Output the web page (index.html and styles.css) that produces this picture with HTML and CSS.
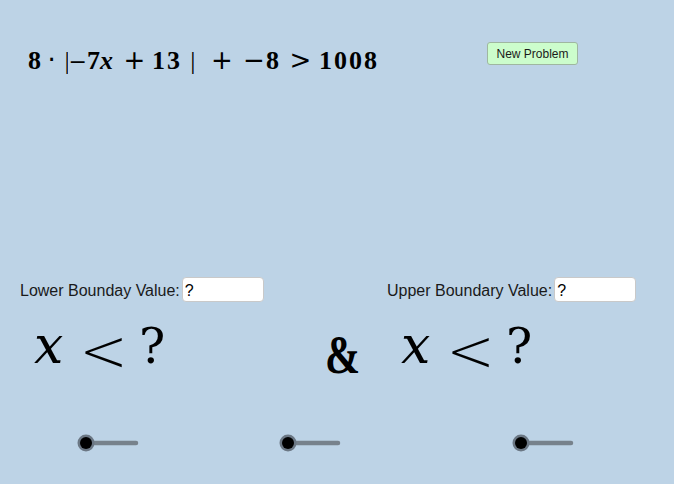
FILE: index.html
```html
<!DOCTYPE html>
<html>
<head>
<meta charset="utf-8">
<link rel="stylesheet" href="styles.css">
</head>
<body>
<div class="app">
  <div class="top">
    <div class="eq">
      <span class="tk d t1">8</span><span class="tk op t2">·</span><span class="tk bar t3">|</span><span class="tk op sm t4">−</span><span class="tk t5">7</span><span class="tk v t6">x</span><span class="tk op t7">+</span><span class="tk d t8">13</span><span class="tk bar t9">|</span><span class="tk op t10">+</span><span class="tk op t11">−</span><span class="tk d t12">8</span><span class="tk op t13">&gt;</span><span class="tk d t14">1008</span>
    </div>
    <button class="btn">New Problem</button>
  </div>

  <div class="inputs">
    <div class="field lower">
      <label class="lbl">Lower Bounday Value:</label><input class="box" type="text" value="?">
    </div>
    <div class="field">
      <label class="lbl">Upper Boundary Value:</label><input class="box" type="text" value="?">
    </div>
  </div>

  <div class="ineqs">
    <div class="ineq first"><span class="bx">x</span><span class="blt">&lt;</span><span class="bq">?</span></div><div class="amp"><span class="ampg">&amp;</span></div><div class="ineq"><span class="bx">x</span><span class="blt">&lt;</span><span class="bq">?</span></div>
  </div>

  <div class="sliders">
    <svg class="slider s1" width="70" height="20" viewBox="0 0 70 20"><line x1="10" y1="10" x2="60" y2="10" stroke="#77828c" stroke-width="4.5" stroke-linecap="round"/><circle cx="10" cy="10" r="8.5" fill="#6b7784"/><circle cx="10" cy="10" r="6" fill="#000"/></svg>
    <svg class="slider s2" width="70" height="20" viewBox="0 0 70 20"><line x1="10" y1="10" x2="60" y2="10" stroke="#77828c" stroke-width="4.5" stroke-linecap="round"/><circle cx="10" cy="10" r="8.5" fill="#6b7784"/><circle cx="10" cy="10" r="6" fill="#000"/></svg>
    <svg class="slider s3" width="70" height="20" viewBox="0 0 70 20"><line x1="10" y1="10" x2="60" y2="10" stroke="#77828c" stroke-width="4.5" stroke-linecap="round"/><circle cx="10" cy="10" r="8.5" fill="#6b7784"/><circle cx="10" cy="10" r="6" fill="#000"/></svg>
  </div>
</div>
</body>
</html>
```

FILE: styles.css
```css
html, body {
  margin: 0;
  padding: 0;
  background: #bdd3e6;
}
.app {
  width: 674px;
  height: 484px;
  background: #bdd3e6;
  display: flex;
  flex-direction: column;
  overflow: hidden;
}
.top {
  display: flex;
  align-items: flex-start;
  padding: 42px 0 0 28px;
  height: 23px;
}
.eq {
  width: 459px;
  flex-shrink: 0;
  font-family: "Liberation Serif", serif;
  font-weight: bold;
  font-size: 26px;
  line-height: 30px;
  margin-top: 3px;
  color: #000;
  white-space: nowrap;
  display: flex;
  align-items: baseline;
}
.tk { display: inline-block; flex-shrink: 0; }
.d { letter-spacing: 2px; }
.v { font-style: italic; }
.op {
  font-family: "DejaVu Sans", sans-serif;
  font-weight: normal;
  font-size: 26px;
}
.op.sm { font-size: 22px; }
.bar { font-weight: normal; overflow: hidden; color: #000; }
.t1 { width: 19.4px; }
.t2 { width: 17px; }
.t3 { width: 4px; }
.t4 { width: 18.5px; }
.t5 { width: 13.1px; }
.t6 { width: 23.6px; }
.t7 { width: 28.4px; }
.t8 { width: 38.4px; }
.t9 { width: 20.7px; }
.t10 { width: 32px; }
.t11 { width: 22.9px; }
.t12 { width: 23.6px; }
.t13 { width: 29.4px; }
.btn {
  width: 91px;
  height: 23px;
  padding: 0;
  background: #ccfdcc;
  border: 1px solid #9fb7a0;
  border-radius: 3px;
  font-family: "Liberation Sans", Arial, sans-serif;
  font-size: 12px;
  color: #1a1a1a;
}
.inputs {
  display: flex;
  margin-top: 212px;
  padding-left: 20px;
  height: 25px;
}
.field {
  display: flex;
  align-items: center;
}
.field.lower {
  width: 367px;
}
.lbl {
  font-family: "Liberation Sans", Arial, sans-serif;
  font-size: 16px;
  color: #1a1a1a;
  margin-right: 2px;
  padding-top: 3px;
}
.box {
  box-sizing: border-box;
  width: 82px;
  height: 25px;
  margin: 0;
  border: 1px solid #c9c9c9;
  border-radius: 4px;
  background: #fff;
  font-family: "Liberation Sans", Arial, sans-serif;
  font-size: 16px;
  color: #000;
  padding: 3px 2px 0;
  outline: none;
}
.ineqs {
  padding-left: 34px;
  margin-top: 13px;
  height: 60px;
  font-family: "DejaVu Serif", serif;
  font-size: 52px;
  line-height: 60px;
  white-space: nowrap;
}
.ineq {
  display: inline-block;
}
.ineq.first { width: 291px; }
.bx {
  display: inline-block;
  font-style: italic;
  width: 45.2px;
}
.blt {
  display: inline-block;
  font-family: "DejaVu Sans", sans-serif;
  font-weight: 200;
  font-size: 58px;
  width: 59.8px;
  vertical-align: -8px;
}
.bq {
  display: inline-block;
  font-size: 49px;
}
.amp {
  display: inline-block;
  width: 76px;
  vertical-align: -10px;
}
.ampg {
  display: inline-block;
  font-family: "Liberation Serif", serif;
  font-weight: bold;
  font-size: 54px;
  transform: scaleX(0.78);
  transform-origin: left center;
}
.sliders {
  display: flex;
  padding-left: 76px;
  margin-top: 58px;
}
.slider { display: block; }
.s1 { margin-right: 132px; }
.s2 { margin-right: 163px; }
```
